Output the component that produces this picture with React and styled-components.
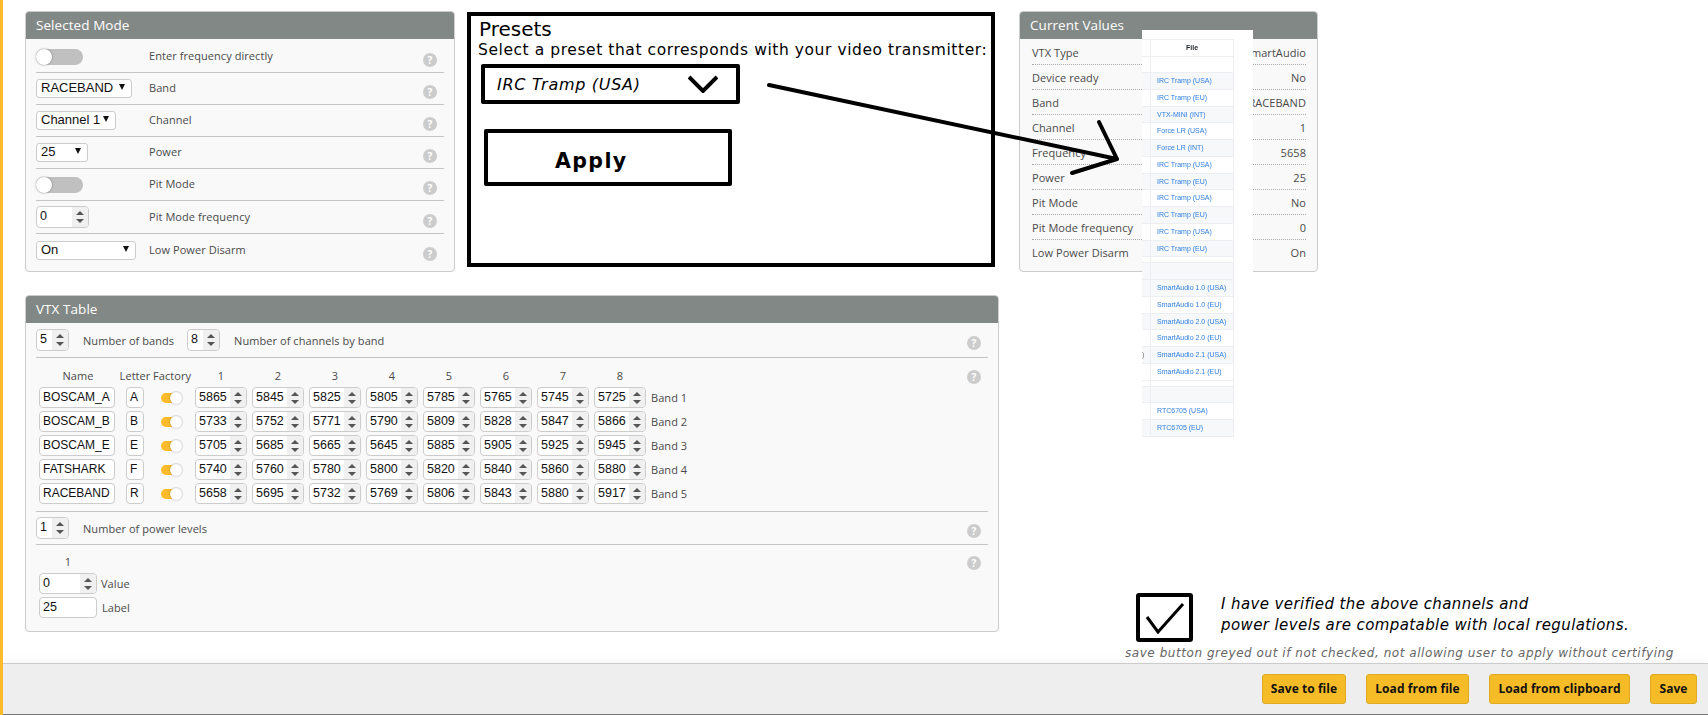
import React from 'react';
import styled, { createGlobalStyle } from 'styled-components';

const GlobalStyle = createGlobalStyle`
    html, body {
        margin: 0;
        height: 100%;
        background: #fff;
    }
    * { box-sizing: border-box; }
`;

const Page = styled.div`
    position: relative;
    height: 715px;
    overflow: hidden;
    display: flex;
    flex-direction: column;
    border-left: 3px solid #ffbb2a;
    font-family: 'Open Sans', sans-serif;
    font-size: 11px;
    letter-spacing: 0.06px;
    color: #4a4a4a;
`;

const Content = styled.div`
    flex: 1;
    min-height: 0;
    padding: 11px 0 0 22px;
`;

const TopRow = styled.div`
    display: flex;
    align-items: flex-start;
    height: 284px;
`;

const LowerRow = styled.div`
    display: flex;
    align-items: flex-start;
`;

const Panel = styled.section`
    width: ${p => p.$width}px;
    margin-left: ${p => p.$left || 0}px;
    flex: none;
    background: #f9f9f9;
    border: 1px solid #ccc;
    border-radius: 4px;
    overflow: hidden;
`;

const PanelHeader = styled.div`
    height: 27px;
    line-height: 27px;
    padding-left: 10px;
    background: #828885;
    color: #fff;
    font-size: 13.5px;
`;

const ModeBody = styled.div`
    padding: 2px 0 5px;
`;

const ModeRow = styled.div`
    display: flex;
    align-items: center;
    height: ${p => p.$height || 32}px;
    margin: 0 10px;
    border-bottom: ${p => (p.$last ? 'none' : '1px solid #c4c4c4')};
`;

const ControlCell = styled.div`
    width: 113px;
    flex: none;
    display: flex;
`;

const RowLabel = styled.span`
    margin-left: ${p => p.$left || 0}px;
    margin-right: ${p => p.$right || 0}px;
    padding-bottom: ${p => p.$lift || 0}px;
    white-space: nowrap;
`;

const Help = styled.span`
    width: 14px;
    height: 14px;
    margin: ${p => p.$top || 7}px 7px 0 auto;
    flex: none;
    border-radius: 50%;
    background: #ccc;
    color: #fff;
    font-size: 10px;
    font-weight: 700;
    line-height: 14px;
    text-align: center;
`;

const Toggle = styled.span`
    position: relative;
    display: block;
    width: 47px;
    height: 16px;
    border-radius: 8px;
    background: #c0c0c0;

    &::after {
        content: '';
        position: absolute;
        left: 0;
        top: 0;
        width: 16px;
        height: 16px;
        border-radius: 50%;
        background: #fff;
        box-shadow: 0 0 2px rgba(0, 0, 0, 0.45);
    }
`;

const SmallToggle = styled.span`
    position: relative;
    display: block;
    width: 20px;
    height: 10px;
    margin-left: 8px;
    border-radius: 5px;
    background: #ffbb2a;

    &::after {
        content: '';
        position: absolute;
        right: -1px;
        top: -1px;
        width: 12px;
        height: 12px;
        border-radius: 50%;
        background: #fff;
        box-shadow: 0 0 2px rgba(0, 0, 0, 0.4);
    }
`;

const Select = styled.div`
    display: flex;
    align-items: center;
    justify-content: space-between;
    width: ${p => p.$width}px;
    height: 19px;
    padding: 0 6px 2px 4px;
    background: #fff;
    border: 1px solid #ccc;
    border-radius: 3px;
    font-family: 'Liberation Sans', sans-serif;
    font-size: 13px;
    letter-spacing: 0;
    color: #111;
    white-space: nowrap;

    &::after {
        content: '';
        margin-bottom: 1px;
        border-left: 3.5px solid transparent;
        border-right: 3.5px solid transparent;
        border-top: 6px solid #111;
    }
`;

const Field = styled.div`
    display: flex;
    width: ${p => p.$width}px;
    height: ${p => p.$height || 21}px;
    background: #fff;
    border: 1px solid #ccc;
    border-radius: 4px;
    font-family: 'Liberation Sans', sans-serif;
    font-size: ${p => p.$size || 12.5}px;
    letter-spacing: 0;
    line-height: ${p => (p.$height || 21) - 3}px;
    color: #111;
    overflow: hidden;
`;

const LetterField = styled(Field)`
    justify-self: center;
`;

const FieldText = styled.span`
    flex: 1;
    padding-left: 3px;
    white-space: nowrap;
`;

const Spin = styled.span`
    width: 16px;
    flex: none;
    display: flex;
    flex-direction: column;
    align-items: center;
    justify-content: center;
    gap: 4px;
    background: #f0f0f0;

    &::before, &::after {
        content: '';
        border-left: 4px solid transparent;
        border-right: 4px solid transparent;
    }
    &::before { border-bottom: 4px solid #555; }
    &::after { border-top: 4px solid #555; }
`;

const NumberField = ({ value, width, height }) => (
    <Field $width={width} $height={height}>
        <FieldText>{value}</FieldText>
        <Spin />
    </Field>
);

const Presets = styled.div`
    width: 528px;
    height: 255px;
    flex: none;
    margin: 1px 0 0 12px;
    background: #fff;
    border: 4px solid #000;
    font-family: 'DejaVu Sans', sans-serif;
    letter-spacing: 0;
    color: #000;
`;

const PresetsTitle = styled.div`
    margin: 1px 0 0 8px;
    font-size: 20px;
    line-height: 24px;
`;

const PresetsHint = styled.div`
    margin: -1px 0 0 7px;
    font-size: 15.5px;
    line-height: 20px;
    letter-spacing: 0.57px;
    white-space: nowrap;
`;

const Dropdown = styled.div`
    display: flex;
    align-items: center;
    justify-content: space-between;
    width: 259px;
    height: 40px;
    margin: 4px 0 0 10px;
    padding: 0 18px 0 12px;
    border: 4px solid #000;
    border-radius: 2px;
    font-size: 16px;
    font-style: italic;
    letter-spacing: 0.7px;
`;

const ApplyButton = styled.div`
    display: flex;
    align-items: center;
    width: 248px;
    height: 57px;
    margin: 25px 0 0 13px;
    padding: 6px 0 0 67px;
    border: 4px solid #000;
    border-radius: 2px;
    font-size: 20.5px;
    font-weight: 700;
    letter-spacing: 1.4px;
`;

const ValueRow = styled.div`
    display: flex;
    justify-content: space-between;
    align-items: center;
    height: 25px;
    margin: 0 11px 0 12px;
    border-bottom: ${p => (p.$last ? 'none' : '1px dotted #aaa')};
`;

const ValuesBody = styled.div`
    padding: 1px 0 6px;
`;

const BandCountRow = styled.div`
    display: flex;
    align-items: center;
    height: ${p => p.$height}px;
    margin: 0 10px;
    border-bottom: 1px solid #c4c4c4;
`;

const TableSection = styled.div`
    display: flex;
    align-items: flex-start;
    margin: 0 10px;
    padding: 9px 0 7px 3px;
    border-bottom: 1px solid #c4c4c4;
`;

const BandGrid = styled.div`
    display: grid;
    grid-template-columns: 78px 36px 42px repeat(8, 57px) auto;
    row-gap: 3px;
    align-items: center;
`;

const ColumnHead = styled.span`
    width: ${p => p.$width || 'auto'};
    height: 17px;
    line-height: 17px;
    text-align: center;
    white-space: nowrap;
`;

const PowerSection = styled.div`
    display: flex;
    align-items: flex-start;
    margin: 0 10px;
    padding: 8px 0 13px 3px;
`;

const PowerGrid = styled.div`
    display: grid;
    grid-template-columns: 58px auto;
    row-gap: 3px;
    align-items: center;
`;

const VerifyBlock = styled.div`
    flex: none;
    margin: 298px 0 0 126px;
    font-family: 'DejaVu Sans', sans-serif;
    letter-spacing: 0;
    color: #000;
`;

const VerifyRow = styled.div`
    display: flex;
    margin-left: 11px;
`;

const CheckBox = styled.div`
    width: 57px;
    height: 49px;
    flex: none;
    border: 4px solid #000;
    border-radius: 3px;
    display: flex;
    align-items: center;
    justify-content: center;
`;

const VerifyText = styled.div`
    margin: 1px 0 0 28px;
    font-size: 15px;
    font-style: italic;
    line-height: 21px;
    letter-spacing: 0.4px;
    white-space: nowrap;
`;

const VerifyNote = styled.div`
    margin-top: 4px;
    font-size: 12px;
    font-style: italic;
    line-height: 15px;
    letter-spacing: 0.55px;
    color: #666;
    white-space: nowrap;
`;

const Footer = styled.footer`
    height: 52px;
    flex: none;
    display: flex;
    justify-content: flex-end;
    gap: 20px;
    padding: 10px 11px 0 0;
    background: #eee;
    border-top: 1px solid #ccc;
    border-bottom: 1px solid #777;
    box-shadow: 0 -4px 8px rgba(0, 0, 0, 0.03);
`;

const ActionButton = styled.div`
    width: ${p => p.$width}px;
    height: 30px;
    line-height: 28px;
    text-align: center;
    background: #f6bc27;
    border: 1px solid #dfaa20;
    border-radius: 3px;
    font-size: 12px;
    font-weight: 700;
    color: #111;
`;

/* pasted table picture that sits over the Current Values panel */
const ShotOverlay = styled.div`
    position: absolute;
    left: 1139px;
    top: 30px;
    width: 111px;
    height: 415px;
    padding-top: 9px;
    background: #fff;
    font-family: 'Liberation Sans', sans-serif;
    font-size: 7px;
    letter-spacing: 0;
    filter: blur(0.35px);
`;

const ShotTable = styled.div`
    width: 92px;
    border-top: 1px solid #eceef1;
    border-right: 1px solid #eceef1;
`;

const ShotRow = styled.div`
    display: flex;
    height: ${p => p.$height || 16.75}px;
    background: ${p => (p.$shade ? '#f6f8fa' : '#fff')};
    border-bottom: 1px solid #eceef1;
`;

const ShotStub = styled.span`
    width: 9px;
    flex: none;
    border-right: 1px solid #eceef1;
    color: #777;
    line-height: 15px;
`;

const ShotCell = styled.span`
    flex: 1;
    padding-left: ${p => (p.$head ? 0 : 6)}px;
    color: ${p => (p.$head ? '#24292e' : '#2f7fe0')};
    font-weight: ${p => (p.$head ? 700 : 400)};
    text-align: ${p => (p.$head ? 'center' : 'left')};
    line-height: 15px;
    white-space: nowrap;
`;

const ArrowLayer = styled.svg`
    position: absolute;
    left: 760px;
    top: 80px;
`;

const modeRows = [
    { label: 'Enter frequency directly', control: <Toggle /> },
    { label: 'Band', control: <Select $width={96}>RACEBAND</Select> },
    { label: 'Channel', control: <Select $width={80}>Channel 1</Select> },
    { label: 'Power', control: <Select $width={52}>25</Select> },
    { label: 'Pit Mode', control: <Toggle /> },
    { label: 'Pit Mode frequency', control: <NumberField value="0" width={53} height={22} />, height: 33 },
    { label: 'Low Power Disarm', control: <Select $width={100}>On</Select>, last: true }
];

const currentValues = [
    ['VTX Type', 'SmartAudio'],
    ['Device ready', 'No'],
    ['Band', 'RACEBAND'],
    ['Channel', '1'],
    ['Frequency', '5658'],
    ['Power', '25'],
    ['Pit Mode', 'No'],
    ['Pit Mode frequency', '0'],
    ['Low Power Disarm', 'On']
];

const bands = [
    ['BOSCAM_A', 'A', [5865, 5845, 5825, 5805, 5785, 5765, 5745, 5725]],
    ['BOSCAM_B', 'B', [5733, 5752, 5771, 5790, 5809, 5828, 5847, 5866]],
    ['BOSCAM_E', 'E', [5705, 5685, 5665, 5645, 5885, 5905, 5925, 5945]],
    ['FATSHARK', 'F', [5740, 5760, 5780, 5800, 5820, 5840, 5860, 5880]],
    ['RACEBAND', 'R', [5658, 5695, 5732, 5769, 5806, 5843, 5880, 5917]]
];

const shotRows = [
    { height: 16 },
    { name: 'IRC Tramp (USA)' },
    { name: 'IRC Tramp (EU)' },
    { name: 'VTX-MINI (INT)' },
    { name: 'Force LR (USA)' },
    { name: 'Force LR (INT)' },
    { name: 'IRC Tramp (USA)' },
    { name: 'IRC Tramp (EU)' },
    { name: 'IRC Tramp (USA)' },
    { name: 'IRC Tramp (EU)' },
    { name: 'IRC Tramp (USA)' },
    { name: 'IRC Tramp (EU)' },
    { height: 6 },
    { shade: true },
    { name: 'SmartAudio 1.0 (USA)' },
    { name: 'SmartAudio 1.0 (EU)' },
    { name: 'SmartAudio 2.0 (USA)' },
    { name: 'SmartAudio 2.0 (EU)' },
    { name: 'SmartAudio 2.1 (USA)', stub: ')' },
    { name: 'SmartAudio 2.1 (EU)' },
    { height: 6 },
    { shade: true },
    { name: 'RTC6705 (USA)' },
    { name: 'RTC6705 (EU)' }
];

const App = () => {
    let zebra = false;

    return (
        <Page>
            <GlobalStyle />
            <Content>
                <TopRow>
                    <Panel $width={430}>
                        <PanelHeader>Selected Mode</PanelHeader>
                        <ModeBody>
                            {modeRows.map(row => (
                                <ModeRow key={row.label} $height={row.height} $last={row.last}>
                                    <ControlCell>{row.control}</ControlCell>
                                    <RowLabel $lift={2}>{row.label}</RowLabel>
                                    <Help>?</Help>
                                </ModeRow>
                            ))}
                        </ModeBody>
                    </Panel>

                    <Presets>
                        <PresetsTitle>Presets</PresetsTitle>
                        <PresetsHint>Select a preset that corresponds with your video transmitter:</PresetsHint>
                        <Dropdown>
                            IRC Tramp (USA)
                            <svg width="30" height="18" viewBox="0 0 30 18">
                                <path d="M1 2 L15 16 L29 2" fill="none" stroke="#000" strokeWidth="4" />
                            </svg>
                        </Dropdown>
                        <ApplyButton>Apply</ApplyButton>
                    </Presets>

                    <Panel $width={299} $left={24}>
                        <PanelHeader>Current Values</PanelHeader>
                        <ValuesBody>
                            {currentValues.map(([label, value], i) => (
                                <ValueRow key={label} $last={i === currentValues.length - 1}>
                                    <span>{label}</span>
                                    <span>{value}</span>
                                </ValueRow>
                            ))}
                        </ValuesBody>
                    </Panel>
                </TopRow>

                <LowerRow>
                    <Panel $width={974}>
                        <PanelHeader>VTX Table</PanelHeader>
                        <BandCountRow $height={35}>
                            <NumberField value="5" width={33} height={22} />
                            <RowLabel $left={14} $right={13}>Number of bands</RowLabel>
                            <NumberField value="8" width={33} height={22} />
                            <RowLabel $left={14}>Number of channels by band</RowLabel>
                            <Help $top={6}>?</Help>
                        </BandCountRow>

                        <TableSection>
                            <BandGrid>
                                <ColumnHead>Name</ColumnHead>
                                <ColumnHead>Letter</ColumnHead>
                                <ColumnHead $width="37px">Factory</ColumnHead>
                                {[1, 2, 3, 4, 5, 6, 7, 8].map(n => (
                                    <ColumnHead key={n} $width="52px">{n}</ColumnHead>
                                ))}
                                <span />
                                {bands.map(([name, letter, freqs], b) => (
                                    <React.Fragment key={name}>
                                        <Field $width={76} $size={12}>
                                            <FieldText>{name}</FieldText>
                                        </Field>
                                        <LetterField $width={18} $size={12}>
                                            <FieldText>{letter}</FieldText>
                                        </LetterField>
                                        <SmallToggle />
                                        {freqs.map((freq, i) => (
                                            <NumberField key={i} value={freq} width={52} />
                                        ))}
                                        <span>Band {b + 1}</span>
                                    </React.Fragment>
                                ))}
                            </BandGrid>
                            <Help $top={3}>?</Help>
                        </TableSection>

                        <BandCountRow $height={33}>
                            <NumberField value="1" width={33} height={22} />
                            <RowLabel $left={14}>Number of power levels</RowLabel>
                            <Help $top={6}>?</Help>
                        </BandCountRow>

                        <PowerSection>
                            <PowerGrid>
                                <ColumnHead>1</ColumnHead>
                                <span />
                                <NumberField value="0" width={58} />
                                <RowLabel $left={4}>Value</RowLabel>
                                <Field $width={58}>
                                    <FieldText>25</FieldText>
                                </Field>
                                <RowLabel $left={5}>Label</RowLabel>
                            </PowerGrid>
                            <Help $top={3}>?</Help>
                        </PowerSection>
                    </Panel>

                    <VerifyBlock>
                        <VerifyRow>
                            <CheckBox>
                                <svg width="40" height="32" viewBox="0 0 40 32">
                                    <path d="M2 15 L13 30 L38 2" fill="none" stroke="#000" strokeWidth="3" />
                                </svg>
                            </CheckBox>
                            <VerifyText>
                                I have verified the above channels and
                                <br />
                                power levels are compatable with local regulations.
                            </VerifyText>
                        </VerifyRow>
                        <VerifyNote>save button greyed out if not checked, not allowing user to apply without certifying</VerifyNote>
                    </VerifyBlock>
                </LowerRow>
            </Content>

            <Footer>
                <ActionButton $width={84}>Save to file</ActionButton>
                <ActionButton $width={103}>Load from file</ActionButton>
                <ActionButton $width={141}>Load from clipboard</ActionButton>
                <ActionButton $width={47}>Save</ActionButton>
            </Footer>

            <ShotOverlay>
                <ShotTable>
                    <ShotRow $height={17}>
                        <ShotStub />
                        <ShotCell $head>File</ShotCell>
                    </ShotRow>
                    {shotRows.map((row, i) => {
                        if (!row.height) zebra = !zebra;
                        return (
                            <ShotRow key={i} $height={row.height} $shade={row.shade || (row.name && zebra)}>
                                <ShotStub>{row.stub}</ShotStub>
                                <ShotCell>{row.name}</ShotCell>
                            </ShotRow>
                        );
                    })}
                </ShotTable>
            </ShotOverlay>

            <ArrowLayer width="370" height="100" viewBox="0 0 370 100">
                <path
                    d="M6 5 L354 79 M336 42 L354 79 L309 93"
                    fill="none"
                    stroke="#000"
                    strokeWidth="4"
                    strokeLinecap="round"
                    strokeLinejoin="round"
                />
            </ArrowLayer>
        </Page>
    );
};

export default App;
